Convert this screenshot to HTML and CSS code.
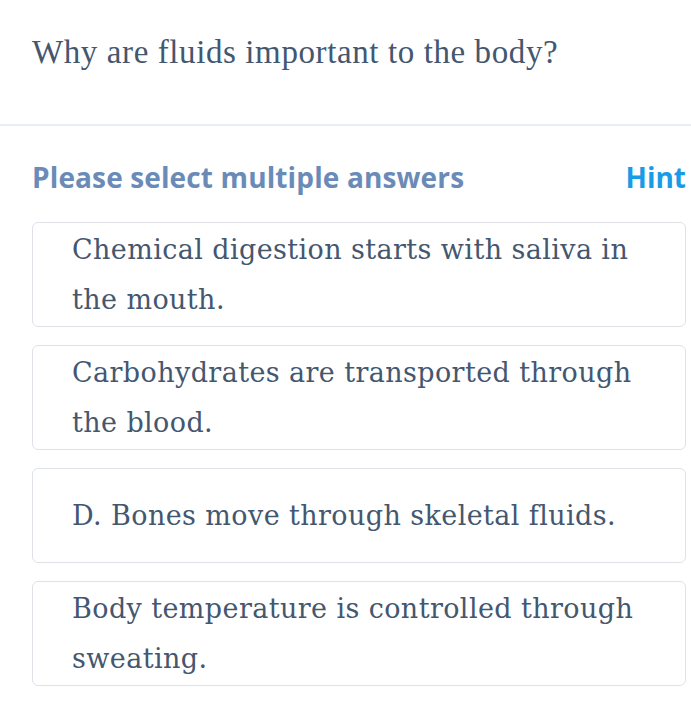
FILE: index.html
```html
<!DOCTYPE html>
<html lang="en">
<head>
    <meta charset="UTF-8">
    <title>Question</title>
    <link rel="stylesheet" href="styles.css">
</head>
<body>
    <div class="question">
        <h1 class="question-text">Why are fluids important to the body?</h1>
    </div>

    <div class="answers">
        <div class="answers-head">
            <span class="prompt">Please select multiple answers</span>
            <a class="hint" href="#">Hint</a>
        </div>

        <ul class="choices">
            <li class="choice">Chemical digestion starts with saliva in the mouth.</li>
            <li class="choice">Carbohydrates are transported through the blood.</li>
            <li class="choice">D. Bones move through skeletal fluids.</li>
            <li class="choice">Body temperature is controlled through sweating.</li>
        </ul>
    </div>
</body>
</html>
```

FILE: styles.css
```css
* {
    margin: 0;
    padding: 0;
    box-sizing: border-box;
}

body {
    background: #fff;
    color: #44576f;
}

.question {
    padding: 32px 5px 52px 32px;
    border-bottom: 2px solid #e6edf4;
}

.question-text {
    font-family: 'Liberation Serif', serif;
    font-weight: normal;
    font-size: 33px;
    line-height: 40px;
    letter-spacing: 0.6px;
}

.answers {
    padding: 32px 5px 0 32px;
}

.answers-head {
    display: flex;
    justify-content: space-between;
    align-items: baseline;
    font-family: 'Open Sans', sans-serif;
    font-weight: bold;
    font-size: 28px;
    line-height: 38px;
}

.prompt {
    color: #6a8bb8;
    letter-spacing: 0.13px;
}

.hint {
    color: #1a9be6;
    text-decoration: none;
}

.choices {
    list-style: none;
    display: flex;
    flex-direction: column;
    gap: 18px;
    margin-top: 26px;
}

.choice {
    display: flex;
    align-items: center;
    min-height: 95px;
    padding: 1.5px 40px 1.5px 39px;
    border: 1px solid #dfe3e7;
    border-radius: 6px;
    font-family: 'DejaVu Serif', serif;
    font-size: 27px;
    line-height: 50px;
    letter-spacing: 0.4px;
}
```
